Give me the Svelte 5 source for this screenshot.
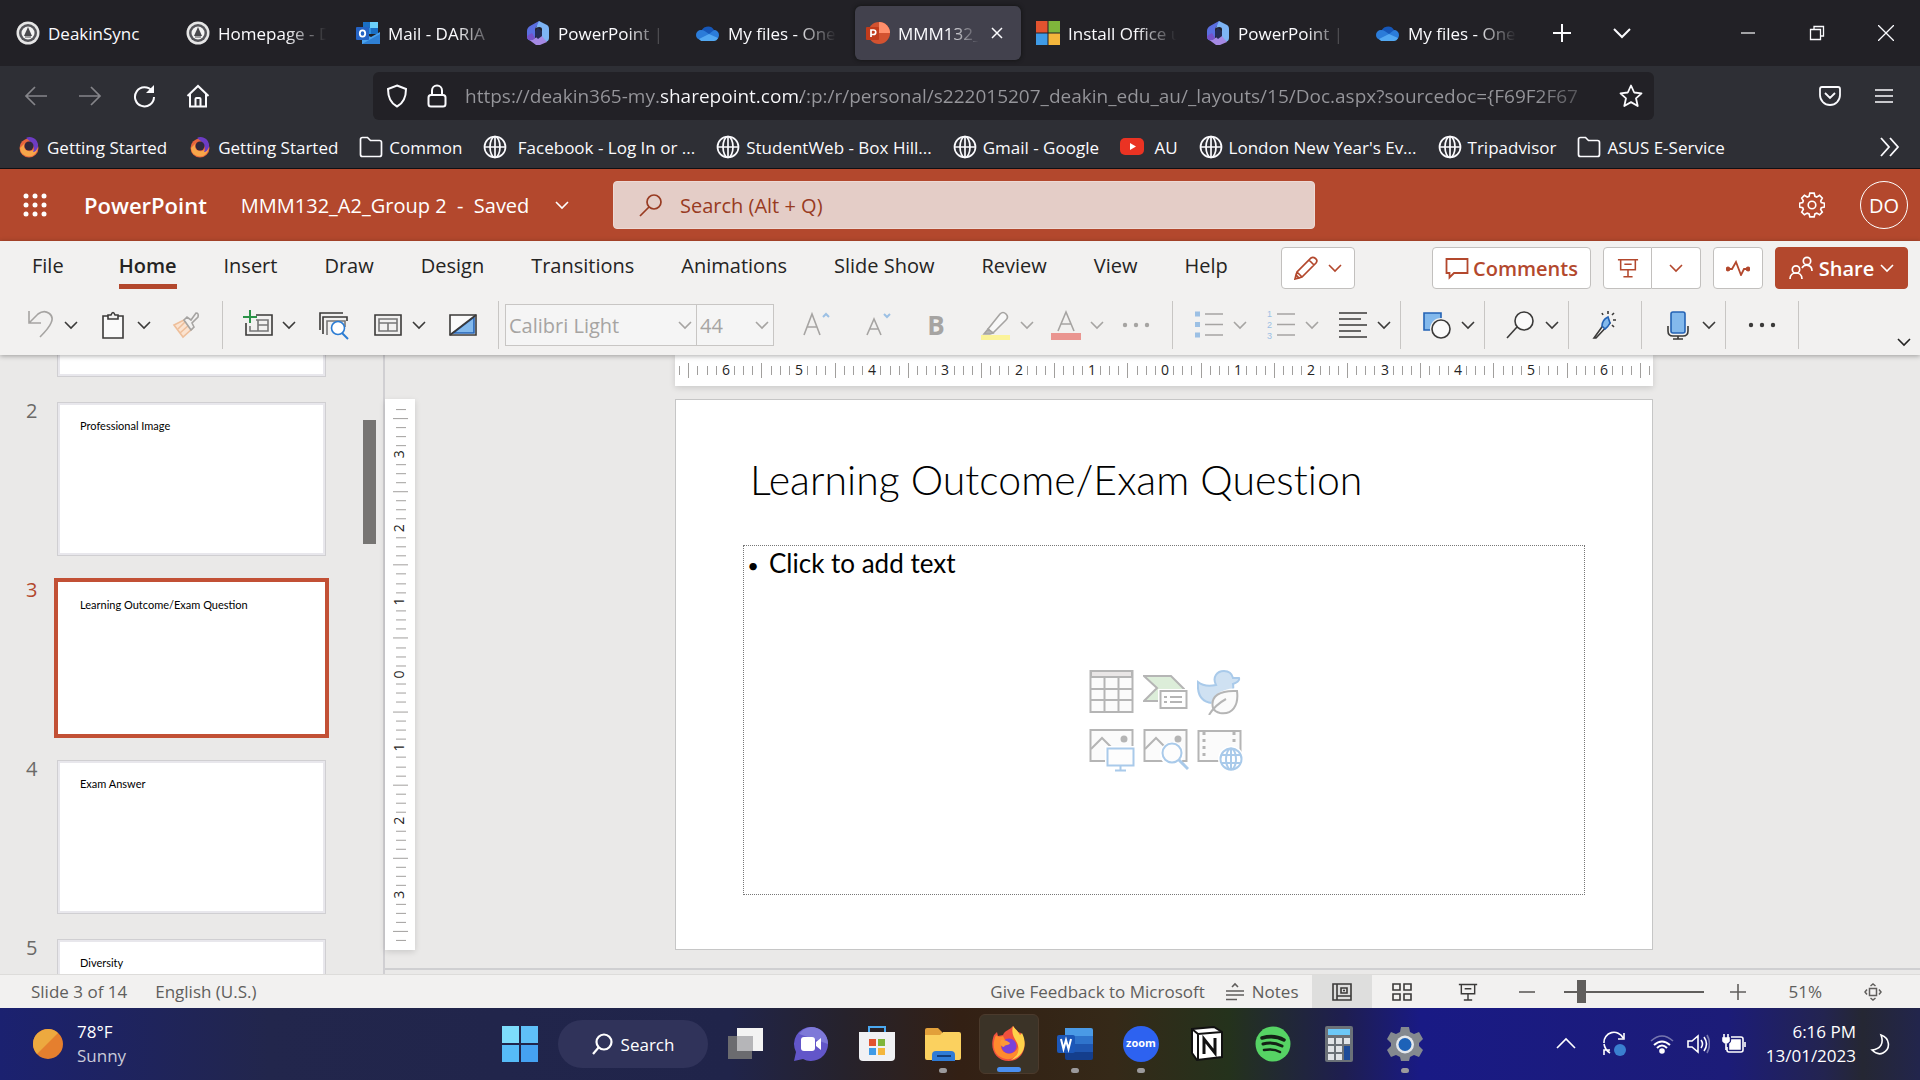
<script lang="ts">
	const browserTabs = [
		{ icon: 'deakin', title: 'DeakinSync' },
		{ icon: 'deakin', title: 'Homepage - D' },
		{ icon: 'outlook', title: 'Mail - DARIA' },
		{ icon: 'office', title: 'PowerPoint | M' },
		{ icon: 'onedrive', title: 'My files - One' },
		{ icon: 'ppt', title: 'MMM132_A', active: true },
		{ icon: 'windows', title: 'Install Office u' },
		{ icon: 'office', title: 'PowerPoint | M' },
		{ icon: 'onedrive', title: 'My files - One' }
	];

	const bookmarks = [
		{ icon: 'firefox', label: 'Getting Started' },
		{ icon: 'firefox', label: 'Getting Started' },
		{ icon: 'folder', label: 'Common' },
		{ icon: 'globe', label: '\u00a0Facebook - Log In or ...' },
		{ icon: 'globe', label: 'StudentWeb - Box Hill...' },
		{ icon: 'globe', label: 'Gmail - Google' },
		{ icon: 'youtube', label: '\u00a0AU' },
		{ icon: 'globe', label: "London New Year's Ev..." },
		{ icon: 'globe', label: 'Tripadvisor' },
		{ icon: 'folder', label: 'ASUS E-Service' }
	];

	const ribbonTabs = ['File', 'Home', 'Insert', 'Draw', 'Design', 'Transitions', 'Animations', 'Slide Show', 'Review', 'View', 'Help'];

	const slides = [
		{ id: 1, title: '' },
		{ id: 2, title: 'Professional Image' },
		{ id: 3, title: 'Learning Outcome/Exam Question' },
		{ id: 4, title: 'Exam Answer' },
		{ id: 5, title: 'Diversity' }
	];

	const taskApps = [
		{ icon: 'taskview', label: 'Task View' },
		{ icon: 'chat', label: 'Chat' },
		{ icon: 'store', label: 'Microsoft Store' },
		{ icon: 'explorer', label: 'File Explorer', open: true },
		{ icon: 'firefox', label: 'Firefox', active: true },
		{ icon: 'word', label: 'Word', open: true },
		{ icon: 'zoom', label: 'Zoom', open: true },
		{ icon: 'notion', label: 'Notion' },
		{ icon: 'spotify', label: 'Spotify' },
		{ icon: 'calculator', label: 'Calculator' },
		{ icon: 'settings', label: 'Settings', open: true }
	];

	let url = $state('https://deakin365-my.sharepoint.com/:p:/r/personal/s222015207_deakin_edu_au/_layouts/15/Doc.aspx?sourcedoc={F69F2F67');
	let ribbon = $state('Home');
	let selected = $state(3);
	let zoom = $state(51);

	// eight ticks to the inch, every fourth one long, whole inches get a number
	const inch = 73.2;
	function ticks(length: number) {
		const mid = length / 2;
		const count = Math.floor((mid - 3) / (inch / 8));
		const list = [];
		for (let i = -count; i <= count; i++) {
			list.push({ pos: Math.round(mid + (i * inch) / 8), long: i % 4 === 0, num: i % 8 === 0 ? Math.abs(i / 8) : null });
		}
		return list;
	}
	const across = ticks(978);
	const down = ticks(550);
</script>

{#snippet chevron()}
	<svg class="chev" viewBox="0 0 14 14" width="14" height="14"><path d="M1 4l6 6 6-6" fill="none" stroke="currentColor" stroke-width="1.6" /></svg>
{/snippet}

{#snippet siteIcon(name: string)}
	<svg class="site" viewBox="0 0 24 24" width="24" height="24">
		{#if name === 'deakin'}
			<circle cx="12" cy="12" r="11.5" fill="#e6e6e6" />
			<circle cx="12" cy="12" r="9" fill="#55555a" />
			<circle cx="12" cy="12" r="6.5" fill="#f2f2f2" />
			<path d="M12 6l4 9H8z" fill="#4a4a4e" />
			<path d="M9 16h6" stroke="#4a4a4e" />
		{:else if name === 'outlook'}
			<path d="M7 1h15v12H7z" fill="#1a6fc4" />
			<path d="M14 1h8v6h-8z" fill="#6bd0fa" />
			<path d="M7 7h8v6H7z" fill="#2a8fe0" />
			<path d="M6 12l9 4 9-5v12H6z" fill="#4aa3ee" />
			<path d="M6 23l18-10v10z" fill="#2f80d4" />
			<rect y="6" width="13" height="13" rx="1" fill="#2563c4" />
			<ellipse cx="6.500" cy="12.500" rx="2.700" ry="3.100" fill="none" stroke="#fff" stroke-width="1.800" />
		{:else if name === 'office'}
			<path d="M13 0L4 5C2 6 1 8 1 10v6c0 3 3 4 5 3l3-2V9c0-2 1-3 2-4l4-2z" fill="#5a6ee0" />
			<path d="M13 0l8 4c2 1 2 3 2 5v8c0 2-1 3-3 4l-4-3V8c0-2-3-3-6-1z" fill="#7db4f4" />
			<path d="M2 18c2 2 5 1 7-1l6-3 6 7-7 3c-1 1-3 1-4 0z" fill="#a58ae4" />
			<path d="M1 15l5-3 3 5c-3 3-6 3-8 0z" fill="#7652c9" />
			<path d="M12 7l4 3v5l-4 3-3-3v-5z" fill="#242b52" />
		{:else if name === 'onedrive'}
			<path d="M5 12a7 7 0 0113-3l-3 9H4z" fill="#1657b8" />
			<path d="M5 19a5 5 0 010-10c3 0 5 2 8 4l5-4a5 5 0 015 5c0 3-2 5-5 5z" fill="#2b7cd9" />
			<path d="M3 18l10-5 9 4c-1 2-2 3-4 3H5z" fill="#52a8f2" />
		{:else if name === 'ppt'}
			<circle cx="13" cy="12" r="11" fill="#d35230" />
			<path d="M13 1a11 11 0 0111 11H13z" fill="#ff8f6b" />
			<rect y="6" width="13" height="13" rx="1" fill="#c13b1b" />
			<path d="M5 16V9h2.500a2 2 0 010 4.500H5" fill="none" stroke="#fff" stroke-width="1.700" />
		{:else if name === 'windows'}
			<path d="M0 0h11.500v11.500H0z" fill="#e2532f" />
			<path d="M12.500 0H24v11.500H12.500z" fill="#7fb63b" />
			<path d="M0 12.500h11.500V24H0z" fill="#3f9be6" />
			<path d="M12.500 12.500H24V24H12.500z" fill="#f4b63c" />
		{:else if name === 'firefox'}
			<circle cx="12" cy="13" r="9.500" fill="#e8643c" />
			<path d="M3 13a9 9 0 0014 7c5-4 4-10 2-13 1 6-3 10-8 9-4-1-5-5-3-8z" fill="#f7a64a" />
			<path d="M9 3c4-3 13 0 12 9-1 3-3 5-5 5 3-6-2-10-7-14z" fill="#6d3cc4" />
			<circle cx="12" cy="11" r="4.500" fill="#30283c" />
		{:else if name === 'folder'}
			<path d="M1.500 4.500q0-2 2-2h5l3 3h9q2 0 2 2v12q0 2-2 2h-17q-2 0-2-2z" fill="none" stroke="#fbfbfe" stroke-width="1.700" />
		{:else if name === 'globe'}
			<g fill="none" stroke="#fbfbfe" stroke-width="1.700">
				<circle cx="12" cy="12" r="10.500" />
				<ellipse cx="12" cy="12" rx="5" ry="10.500" />
				<path d="M12 1.500v21M2 12h20" />
			</g>
		{:else if name === 'youtube'}
			<rect y="3" width="24" height="17" rx="5" fill="#ea3323" />
			<path d="M10 8l6 3.500-6 3.500z" fill="#fff" />
		{/if}
	</svg>
{/snippet}

{#snippet presentIcon(size: number)}
	<svg viewBox="0 0 24 24" width={size} height={size} fill="none" stroke="currentColor" stroke-width="1.700">
		<path d="M1 3h22M4 3v11h16V3M8 8h8M12 14v7M7 21.500h10" />
	</svg>
{/snippet}

{#snippet appIcon(name: string)}
	<svg viewBox="0 0 36 36" width="36" height="36">
		{#if name === 'taskview'}
			<path d="M1 10h24v23H1z" fill="#6b6b6f" />
			<path d="M10 2h26v23H10z" fill="#f3f3f3" />
			<path d="M10 10h16v15H10z" fill="#b5b5b8" />
		{:else if name === 'chat'}
			<path d="M18 1a17 17 0 11-8 32l-9 2 2-9A17 17 0 0118 1z" fill="#6256c9" />
			<path d="M18 1a17 17 0 0117 17L6 8a17 17 0 0112-7z" fill="#7e79d8" />
			<rect x="8" y="11" width="14" height="14" rx="3" fill="#fff" />
			<path d="M23 16l5-4v12l-5-4z" fill="#fff" />
		{:else if name === 'store'}
			<path d="M10 8V1h16v7" fill="none" stroke="#4aa8f0" stroke-width="2" />
			<path d="M0 6h36v25q0 4-4 4H4q-4 0-4-4z" fill="#f0f1f4" />
			<path d="M10 13h7v7h-7z" fill="#e2532f" /><path d="M19 13h7v7h-7z" fill="#7fb63b" />
			<path d="M10 22h7v7h-7z" fill="#3f9be6" /><path d="M19 22h7v7h-7z" fill="#f4b63c" />
		{:else if name === 'explorer'}
			<path d="M0 4q0-2 2-2h11l4 4v8H0z" fill="#e2a03a" />
			<path d="M0 9h15l3-3h16q2 0 2 2v24q0 2-2 2H2q-2 0-2-2z" fill="#fbd15f" />
			<path d="M7 35v-6q0-4 4-4h15q4 0 4 4v6z" fill="#2f7cd6" />
			<path d="M12 30h14" stroke="#123d78" stroke-width="2" />
		{:else if name === 'firefox'}
			<path d="M22 0c2 3 4 4 5 6l3 1c8 12 2 28-12 28S-2 22 3 9l3-3 1 4 5-1c2-5 7-5 10-9z" fill="#f0503f" />
			<path d="M22 0c2 3 5 5 7 9l2-2c7 14-1 25-11 27 8-6 9-13 5-19-2-4-5-7-3-15z" fill="#ffd24a" />
			<path d="M5 9c2 2 4 2 7 1l2 4c-5 3-6 10 1 13 6 2 11-2 12-6 2 8-5 13-12 12C3 31 0 20 5 9z" fill="#ff8a2e" />
			<circle cx="18" cy="20" r="7.500" fill="#7a42d8" />
			<path d="M10 14c4-1 7 2 9 3-1 3-5 1-6 4-3 0-5-4-3-7z" fill="#ff9a36" />
		{:else if name === 'word'}
			<path d="M8 2h26q2 0 2 2v7H8z" fill="#4a9ae6" />
			<path d="M8 10h28v9H8z" fill="#2f74cc" />
			<path d="M8 18h28v8H8z" fill="#1f56b0" />
			<path d="M8 26h28v6q0 2-2 2H10q-2 0-2-2z" fill="#143e8c" />
			<rect y="9" width="18" height="18" rx="2" fill="#1c57b8" />
			<path d="M4 13l2.500 10L9 14l2.500 9L14 13" fill="none" stroke="#fff" stroke-width="2" />
		{:else if name === 'zoom'}
			<circle cx="18" cy="18" r="18" fill="#2d62f0" />
			<text x="18" y="21" text-anchor="middle" fill="#fff" font-size="11" font-weight="700" font-family="Open Sans, sans-serif">zoom</text>
		{:else if name === 'notion'}
			<path d="M3 3l22-2 8 5v25l-25 3-5-7z" fill="#fff" stroke="#111" stroke-width="2" />
			<path d="M3 3l6 5 24-2M9 8v26" fill="none" stroke="#111" stroke-width="2" />
			<path d="M15 28V13l11 14V12" fill="none" stroke="#111" stroke-width="3" />
		{:else if name === 'spotify'}
			<circle cx="18" cy="18" r="17.500" fill="#56d364" />
			<g fill="none" stroke="#142116" stroke-linecap="round">
				<path d="M7 12c7-2 15-2 22 2" stroke-width="3.500" />
				<path d="M8 18c7-2 13-1 19 2" stroke-width="3" />
				<path d="M9 24c6-1 11-1 16 2" stroke-width="2.500" />
			</g>
		{:else if name === 'calculator'}
			<rect x="4" width="28" height="36" rx="2" fill="#6b7178" />
			<path d="M7 3h22v6H7z" fill="#6cc8f8" />
			{#each [0, 1, 2] as row}
				{#each [0, 1, 2] as col}
					{#if !(col === 2 && row > 0)}
						<rect x={7 + col * 8} y={12 + row * 8} width="6" height="6" fill="#e1e4e8" />
					{/if}
				{/each}
			{/each}
			<path d="M23 20h6v14h-6z" fill="#1e4c9a" />
		{:else}
			<path d="M14 1h8l1 5 4 2 5-2 4 7-4 4v3l4 4-4 7-5-2-4 2-1 4h-8l-1-4-4-2-5 2-4-7 4-4v-3L0 13l4-7 5 2 4-2z" fill="#84898f" />
			<circle cx="18" cy="18.500" r="9" fill="#e4e8ec" />
			<circle cx="18" cy="18.500" r="6.500" fill="#1d62b8" />
		{/if}
	</svg>
{/snippet}

<div class="screen">
	<div class="tab-strip">
		{#each browserTabs as tab}
			<div class="tab" class:active={tab.active}>
				{@render siteIcon(tab.icon)}
				<span class="tab-title">{tab.title}</span>
				{#if tab.active}
					<button class="plain" aria-label="Close tab">
						<svg viewBox="0 0 14 14" width="14" height="14" stroke="currentColor" stroke-width="1.500"><path d="M2 2l10 10M12 2L2 12" /></svg>
					</button>
				{/if}
			</div>
		{/each}
		<div class="tab-actions">
			<button class="plain" aria-label="New tab">
				<svg viewBox="0 0 18 18" width="18" height="18" stroke="currentColor" stroke-width="2"><path d="M9 0v18M0 9h18" /></svg>
			</button>
			<button class="plain" aria-label="List all tabs">
				<svg viewBox="0 0 18 18" width="18" height="18" fill="none" stroke="currentColor" stroke-width="2"><path d="M1 5l8 8 8-8" /></svg>
			</button>
		</div>
		<div class="window-buttons">
			<button class="plain" aria-label="Minimise"><svg viewBox="0 0 16 16" width="16" height="16" stroke="currentColor" stroke-width="1.200"><path d="M1 8h14" /></svg></button>
			<button class="plain" aria-label="Restore"><svg viewBox="0 0 16 16" width="16" height="16" fill="none" stroke="currentColor" stroke-width="1.300"><path d="M1.500 4.500h10v10h-10zM5 4V1.500h9.500V11H12" /></svg></button>
			<button class="plain" aria-label="Close"><svg viewBox="0 0 16 16" width="16" height="16" stroke="currentColor" stroke-width="1.300"><path d="M0 0l16 16M16 0L0 16" /></svg></button>
		</div>
	</div>

	<div class="nav-bar">
		<div class="nav-buttons">
			<button class="plain dim" aria-label="Back"><svg viewBox="0 0 24 24" width="24" height="24" fill="none" stroke="currentColor" stroke-width="1.700"><path d="M23 12H2M11 3l-9 9 9 9" /></svg></button>
			<button class="plain dim" aria-label="Forward"><svg viewBox="0 0 24 24" width="24" height="24" fill="none" stroke="currentColor" stroke-width="1.700"><path d="M1 12h21M13 3l9 9-9 9" /></svg></button>
			<button class="plain" aria-label="Reload"><svg viewBox="0 0 24 24" width="24" height="24" fill="none" stroke="currentColor" stroke-width="2"><path d="M20 7a9.500 9.500 0 102 6" /><path d="M22 1v8h-8z" fill="currentColor" stroke="none" /></svg></button>
			<button class="plain" aria-label="Home"><svg viewBox="0 0 24 24" width="24" height="24" fill="none" stroke="currentColor" stroke-width="2"><path d="M1.500 12L12 2l10.500 10M4 10v12.500h16V10M9.500 22v-7q0-1 1-1h3q1 0 1 1v7" /></svg></button>
		</div>
		<div class="url-box">
			<svg viewBox="0 0 24 24" width="24" height="24" fill="none" stroke="currentColor" stroke-width="2"><path d="M12 1.500l9 3.500c0 8-2 14-9 17.500C5 19 3 13 3 5z" /></svg>
			<svg viewBox="0 0 24 24" width="24" height="24" fill="none" stroke="currentColor" stroke-width="2"><rect x="3.500" y="11" width="17" height="11.500" rx="2.500" /><path d="M7 11V6.500a5 5 0 0110 0V11" /></svg>
			<input class="url" aria-label="Address" bind:value={url} />
			<button class="plain" aria-label="Bookmark this page"><svg viewBox="0 0 24 24" width="24" height="24" fill="none" stroke="currentColor" stroke-width="1.800" stroke-linejoin="round"><path d="M12 1.500l3.200 7 7.300.8-5.500 5 1.700 7.700-6.700-3.900L5.300 22 7 14.300l-5.500-5 7.300-.8z" /></svg></button>
		</div>
		<div class="nav-right">
			<button class="plain" aria-label="Save to Pocket"><svg viewBox="0 0 22 20" width="22" height="20" fill="none" stroke="currentColor" stroke-width="1.800"><path d="M3 1h16q2 0 2 2v6a10 10 0 01-20 0V3q0-2 2-2zM6 7l5 5 5-5" /></svg></button>
			<button class="plain" aria-label="Menu"><svg viewBox="0 0 18 16" width="18" height="16" stroke="currentColor" stroke-width="1.700"><path d="M0 2h18M0 8h18M0 14h18" /></svg></button>
		</div>
	</div>

	<div class="bookmarks">
		{#each bookmarks as mark}
			<a href="#{mark.icon}">{@render siteIcon(mark.icon)}<span>{mark.label}</span></a>
		{/each}
		<button class="plain more" aria-label="More bookmarks"><svg viewBox="0 0 20 20" width="20" height="20" fill="none" stroke="currentColor" stroke-width="1.800"><path d="M1 1l8 9-8 9M10 1l8 9-8 9" /></svg></button>
	</div>

	<header>
		<div class="brand">
			<button class="plain" aria-label="App launcher">
				<svg viewBox="0 0 24 24" width="24" height="24" fill="currentColor">
					{#each [3, 12, 21] as y}
						{#each [3, 12, 21] as x}
							<circle cx={x} cy={y} r="2.500" />
						{/each}
					{/each}
				</svg>
			</button>
			<strong>PowerPoint</strong>
			<button class="plain doc-name">MMM132_A2_Group 2&nbsp; -&nbsp; Saved {@render chevron()}</button>
		</div>
		<label class="search">
			<svg viewBox="0 0 24 24" width="24" height="24" fill="none" stroke="currentColor" stroke-width="1.700"><circle cx="15" cy="9" r="7" /><path d="M10 14l-9 9" /></svg>
			<input type="search" placeholder="Search (Alt + Q)" aria-label="Search" />
		</label>
		<div class="account">
			<button class="plain" aria-label="Settings">
				<svg viewBox="0 0 24 24" width="26" height="26" fill="none" stroke="currentColor" stroke-width="1.500">
					<circle cx="12" cy="12" r="3.500" />
					<path d="M10 1h4l.7 3 1.600.7L19 3l2.500 2.700L20 8.300l.6 1.500 2.900.6v3.400l-2.900.7-.6 1.500 1.500 2.600L19 21l-2.600-1.500-1.700.7L14 23h-4l-.7-2.800-1.700-.7L5 21l-2.500-2.500L4 16l-.6-1.500-2.900-.7v-3.400l2.900-.7L4 8.200 2.500 5.700 5 3l2.600 1.600L9.300 4z" />
				</svg>
			</button>
			<button class="avatar">DO</button>
		</div>
	</header>

	<div class="ribbon">
		<div class="ribbon-top">
			<nav>
				{#each ribbonTabs as name}
					<button class:current={ribbon === name} onclick={() => (ribbon = name)}>{name}</button>
				{/each}
			</nav>
			<button class="box pen" aria-label="Editing mode">
				<svg viewBox="0 0 24 24" width="24" height="24" fill="none" stroke="currentColor" stroke-width="1.700"><path d="M1 23l2-7L17 2q2-1.500 4.500.5t.5 4.500L8 21zM3 16l5 5M15 4l5 5M1 23l4-1-3-3z" /></svg>
				{@render chevron()}
			</button>
			<div class="ribbon-actions">
				<button class="box comments">
					<svg viewBox="0 0 24 24" width="24" height="24" fill="none" stroke="currentColor" stroke-width="1.800"><path d="M1.500 3h21v14H9l-4.500 4.500V17h-3z" /></svg>
					Comments
				</button>
				<div class="split">
					<button class="box" aria-label="Present">{@render presentIcon(22)}</button>
					<button class="box" aria-label="Present options">{@render chevron()}</button>
				</div>
				<button class="box catch-up" aria-label="Catch up">
					<svg viewBox="0 0 24 16" width="24" height="16" fill="none" stroke="currentColor" stroke-width="1.800"><path d="M2 9h4l4-7 5 13 3-6h4" /><circle cx="2" cy="9" r="1.500" fill="currentColor" /><circle cx="22" cy="9" r="1.500" fill="currentColor" /></svg>
				</button>
				<button class="box share">
					<svg viewBox="0 0 24 24" width="24" height="24" fill="none" stroke="currentColor" stroke-width="1.700"><circle cx="7" cy="13.500" r="3.700" /><path d="M1 23c0-8 12-8 12 0" /><circle cx="18" cy="5" r="3.700" /><path d="M13 12c2-4 10-4 10 3" /></svg>
					Share
					{@render chevron()}
				</button>
			</div>
		</div>

		<div class="toolbar">
			<div class="group first">
				<button class="tool off" aria-label="Undo"><svg viewBox="0 0 32 32" width="32" height="32"><path d="M5 2v12h12M5 14L14 5c8-6 17 1 13 9-2 5-6 9-11 14" /></svg><span class="dark">{@render chevron()}</span></button>
				<button class="tool" aria-label="Paste"><svg viewBox="0 0 32 32" width="32" height="32"><path d="M6 7h20v22H6z" fill="#fafafa" /><path d="M11 10V6h3q2-5 4 0h3v4z" fill="#f2f1f0" /></svg>{@render chevron()}</button>
				<button class="tool off" aria-label="Format Painter"><svg viewBox="0 0 32 32" width="32" height="32"><path d="M4 16l10-5 8 9-9 8z" fill="#fbe3d0" stroke="#eebf9b" /><path d="M8 20l8-8M10 24l9-8" stroke="#eebf9b" /><path d="M14 11l3-3 4 3 5-7q3 0 2 4l-6 6 2 4-3 3z" fill="#f2f1f0" /></svg></button>
			</div>
			<div class="group slides-group">
				<button class="tool" aria-label="New Slide"><svg viewBox="0 0 32 32" width="32" height="32"><path d="M14 6h16v20H4V14" /><path d="M14 11h12v11H8v-5M16 11v11M16 16h10" stroke="#777" /><path d="M8 1v13M1 8h14" stroke="#2b9348" stroke-width="2" /></svg>{@render chevron()}</button>
				<button class="tool" aria-label="Reuse Slides"><svg viewBox="0 0 32 32" width="32" height="32"><path d="M3 21V4h23M6 25V8h24v4" /><path d="M10 26V12h18v6" stroke="#777" /><circle cx="21" cy="19" r="6.500" fill="#fff" stroke="#2b7cd3" /><path d="M25 24l6 6" stroke="#2b7cd3" stroke-width="2" /></svg></button>
				<button class="tool" aria-label="Layout"><svg viewBox="0 0 32 32" width="32" height="32"><path d="M3 6h26v20H3z" /><path d="M7 10h18v12H7zM7 14h18M16 14v8" stroke="#777" /></svg>{@render chevron()}</button>
				<button class="tool" aria-label="Design Ideas"><svg viewBox="0 0 32 32" width="32" height="32"><path d="M3 6h26v20H3z" fill="#fafafa" /><path d="M27 8v16H6z" fill="#83b9ec" stroke="#2463b5" /><path d="M3 26L29 6" /></svg></button>
			</div>
			<div class="group font-group">
				<div class="font-boxes">
					<span class="select family"><select aria-label="Font"><option>Calibri Light</option></select>{@render chevron()}</span>
					<span class="select size"><select aria-label="Font size"><option>44</option></select>{@render chevron()}</span>
				</div>
				<div class="run wide off">
					<button class="tool" aria-label="Grow font"><svg viewBox="0 0 32 32" width="32" height="32"><path d="M4 26L12 5l8 21M7 18h10" /><path d="M23 8l3-3 3 3" stroke="#9cc0e4" stroke-width="2" /></svg></button>
					<button class="tool" aria-label="Shrink font"><svg viewBox="0 0 32 32" width="32" height="32"><path d="M7 26l7-16 7 16M9 20h10" /><path d="M24 5l3 3 3-3" stroke="#9cc0e4" stroke-width="2" /></svg></button>
					<button class="tool bold" aria-label="Bold">B</button>
					<button class="tool" aria-label="Highlight"><svg viewBox="0 0 32 32" width="32" height="32"><path d="M8 20L20 5q3-3 6 0t0 6L13 24z" fill="#f8f8f8" /><path d="M8 20l5 4-3 1H4z" fill="#b5b5b5" /><path d="M1 28.500h29" stroke="#fbf39a" stroke-width="5" /></svg>{@render chevron()}</button>
				</div>
				<div class="run off">
					<button class="tool" aria-label="Font color"><svg viewBox="0 0 32 32" width="32" height="32"><path d="M8 22l8-19 8 19M11 15h10" /><path d="M1 27.500h30" stroke="#ea9590" stroke-width="7" /></svg>{@render chevron()}</button>
					<button class="tool" aria-label="More font options"><svg viewBox="0 0 32 32" width="32" height="32"><g fill="currentColor" stroke="none"><circle cx="5" cy="16" r="2.200" /><circle cx="16" cy="16" r="2.200" /><circle cx="27" cy="16" r="2.200" /></g></svg></button>
				</div>
			</div>
			<div class="group menu-end">
				<button class="tool off" aria-label="Bullets"><svg viewBox="0 0 32 32" width="32" height="32"><path d="M12 5h18M12 15.500h18M12 26h18" /><path d="M2 5h5M2 15.500h5M2 26h5" stroke="#9cc0e4" stroke-width="5" /></svg>{@render chevron()}</button>
				<button class="tool off" aria-label="Numbering"><svg viewBox="0 0 32 32" width="32" height="32"><path d="M12 5h18M12 15.500h18M12 26h18" /><g class="digits"><text x="2" y="8">1</text><text x="2" y="19">2</text><text x="2" y="30">3</text></g></svg>{@render chevron()}</button>
				<button class="tool" aria-label="Align"><svg viewBox="0 0 32 32" width="32" height="32"><path d="M2 4h28M2 10h22M2 16h28M2 22h22M2 28h28" /></svg>{@render chevron()}</button>
			</div>
			<div class="group menu-end">
				<button class="tool" aria-label="Shapes"><svg viewBox="0 0 32 32" width="32" height="32"><path d="M3 4h17v17H3z" fill="#83b9ec" stroke="#2463b5" /><circle cx="20" cy="20" r="11" fill="#f2f1f0" stroke="none" /><circle cx="20" cy="20" r="9" fill="#fafafa" /></svg>{@render chevron()}</button>
			</div>
			<div class="group menu-end">
				<button class="tool" aria-label="Find"><svg viewBox="0 0 32 32" width="32" height="32"><circle cx="19" cy="12" r="9" fill="#fafafa" /><path d="M12 18L2 29" /></svg>{@render chevron()}</button>
			</div>
			<div class="group">
				<button class="tool" aria-label="Designer"><svg viewBox="0 0 32 32" width="32" height="32"><path d="M5 29L18 11l3 3L7 29z" fill="#fafafa" /><path d="M13 17q0-6 6-9l2 6q-2 4-5 6z" fill="#83b9ec" stroke="#2463b5" /><path d="M13 4l1 2M19 2v3M25 4l-2 2M24 11h3M23 16l2 2" /></svg></button>
			</div>
			<div class="group menu-end">
				<button class="tool" aria-label="Dictate"><svg viewBox="0 0 32 32" width="32" height="32"><rect x="9" y="3" width="14" height="21" rx="2" fill="#83b9ec" stroke="#2463b5" /><path d="M6 17v5q0 5 5 5h10q5 0 5-5v-5M16 27v3M11 30h10" /></svg>{@render chevron()}</button>
			</div>
			<div class="group">
				<button class="tool" aria-label="More options"><svg viewBox="0 0 32 32" width="32" height="32"><g fill="currentColor" stroke="none"><circle cx="5" cy="16" r="2.200" /><circle cx="16" cy="16" r="2.200" /><circle cx="27" cy="16" r="2.200" /></g></svg></button>
			</div>
			<button class="plain collapse" aria-label="Ribbon display options">{@render chevron()}</button>
		</div>
	</div>

	<div class="workspace">
		<aside>
			<ol>
				{#each slides as slide}
					<li class:selected={slide.id === selected}>
						<span class="number">{slide.id}</span>
						<button class="thumb" aria-label="Slide {slide.id}" onclick={() => (selected = slide.id)}><span>{slide.title}</span></button>
					</li>
				{/each}
			</ol>
			<div class="scroll-thumb"></div>
		</aside>

		<main>
			<svg class="ruler across" viewBox="0 0 978 31">
				{#each across as t}
					{#if t.num !== null}
						<text x={t.pos + 1} y="20">{t.num}</text>
					{:else if t.long}
						<path d="M{t.pos + 0.5} 8v15" />
					{:else}
						<path d="M{t.pos + 0.5} 11v9" />
					{/if}
				{/each}
			</svg>
			<svg class="ruler down" viewBox="0 0 30 550">
				{#each down as t}
					{#if t.num !== null}
						<text transform="translate(19 {t.pos}) rotate(-90)">{t.num}</text>
					{:else if t.long}
						<path d="M8 {t.pos + 0.5}h15" />
					{:else}
						<path d="M11 {t.pos + 0.5}h10" />
					{/if}
				{/each}
			</svg>
			<article class="slide">
				<h1>Learning Outcome/Exam Question</h1>
				<div class="placeholder">
					<ul><li>Click to add text</li></ul>
					<div class="inserts">
						<button class="plain" aria-label="Insert table"><svg viewBox="0 0 46 46" width="46" height="46"><path d="M1.500 2h42v41h-42z" fill="#fbfbfb" /><path d="M2 2h41v6H2z" fill="#e9e6e6" /><path d="M1.500 8h42M1.500 20h42M1.500 31h42M15.500 8v35M29.500 8v35" /></svg></button>
						<button class="plain" aria-label="Insert SmartArt"><svg viewBox="0 0 46 46" width="46" height="46"><path d="M1 7h27l13 13v12H1l13-13z" fill="#dcedd9" /><path d="M15 20h31v22H15z" fill="#fff" stroke="none" /><path d="M17.500 22h26v17h-26z" fill="#fff" /><path d="M21 28h3M27 28h12M21 33h3M27 33h12" /></svg></button>
						<button class="plain" aria-label="Insert icon"><svg viewBox="0 0 46 46" width="46" height="46"><path d="M1 13c6 5 13 4 18 3-4-8 1-14 8-14 5 0 8 3 9 7h6c1 3-3 5-6 6 2 12-8 20-21 19C5 33 0 26 1 13z" fill="#cfe1f2" stroke="#a9caea" /><path d="M14 45c-2-18 8-26 30-26 1 14-4 27-20 27z" fill="#fff" stroke="none" /><path d="M16 39c-3-12 7-18 24-17 2 15-5 24-17 22q-5-1-7-5zM12 46q6-10 17-16" fill="#fbfbfb" /></svg></button>
						<button class="plain" aria-label="Insert stock image"><svg viewBox="0 0 46 46" width="46" height="46"><path d="M1.500 3h42v31h-42z" fill="#fbfbfb" /><path d="M2 22l11-11 9 9" /><circle cx="35" cy="12" r="2.500" fill="#b5b5b5" /><path d="M16 19h30v25H16z" fill="#fff" stroke="none" /><path d="M18.500 21.500h26v17h-26zM31.500 39v4M26 43.500h11" stroke="#a9caea" fill="#fdfdfd" /></svg></button>
						<button class="plain" aria-label="Insert picture"><svg viewBox="0 0 46 46" width="46" height="46"><path d="M1.500 3h42v31h-42z" fill="#fbfbfb" /><path d="M2 22l11-11 9 9" /><circle cx="35" cy="12" r="2.500" fill="#b5b5b5" /><circle cx="29" cy="27" r="12" fill="#fff" stroke="none" /><circle cx="29" cy="26" r="9.500" fill="#fdfdfd" stroke="#a9caea" /><path d="M36 33l9 9" stroke="#a9caea" stroke-width="3" /></svg></button>
						<button class="plain" aria-label="Insert video"><svg viewBox="0 0 46 46" width="46" height="46"><path d="M1.500 4h42v30h-42z" fill="#fbfbfb" /><path d="M7 5v28M37 5v14" stroke-width="3" stroke-dasharray="3 4" /><circle cx="34" cy="32" r="13" fill="#fff" stroke="none" /><g stroke="#a9caea" fill="none"><circle cx="34" cy="32" r="10.500" /><ellipse cx="34" cy="32" rx="5" ry="10.500" /><path d="M34 21v22M25 28h18M25 36h18" /></g></svg></button>
					</div>
				</div>
			</article>
		</main>
	</div>

	<div class="status">
		<span>Slide 3 of 14</span>
		<button class="plain language">English (U.S.)</button>
		<button class="plain feedback">Give Feedback to Microsoft</button>
		<button class="plain notes"><svg viewBox="0 0 20 20" width="20" height="20" fill="none" stroke="currentColor" stroke-width="1.600"><path d="M7 5l3-3 3 3M1 9h18M1 13h18M1 17.500h11" /></svg>Notes</button>
		<button class="plain view on" aria-label="Normal view"><svg viewBox="0 0 20 18" width="20" height="18" fill="none" stroke="currentColor" stroke-width="1.600"><path d="M1 1h18v16H1zM5 1v16M5 13h14M9 5h6v5H9zM11 7.500h2" /></svg></button>
		<button class="plain view" aria-label="Slide sorter"><svg viewBox="0 0 20 18" width="20" height="18" fill="none" stroke="currentColor" stroke-width="1.600"><path d="M1 1h7v6H1zM12 1h7v6h-7zM1 11h7v6H1zM12 11h7v6h-7z" /></svg></button>
		<button class="plain view show" aria-label="Slide show">{@render presentIcon(20)}</button>
		<button class="plain step" aria-label="Zoom out"><svg viewBox="0 0 18 18" width="18" height="18" stroke="currentColor" stroke-width="1.600"><path d="M1 9h16" /></svg></button>
		<input type="range" min="10" max="400" aria-label="Zoom" bind:value={zoom} />
		<button class="plain step" aria-label="Zoom in"><svg viewBox="0 0 18 18" width="18" height="18" stroke="currentColor" stroke-width="1.600"><path d="M1 9h16M9 1v16" /></svg></button>
		<span class="percent">{zoom}%</span>
		<button class="plain" aria-label="Fit to window"><svg viewBox="0 0 18 18" width="18" height="18" fill="none" stroke="currentColor" stroke-width="1.500"><path d="M5.500 5.500h7v7h-7zM6.500 3L9 1l2.500 2M6.500 15L9 17l2.500-2M3 6.500L1 9l2 2.500M15 6.500L17 9l-2 2.500" /></svg></button>
	</div>

	<footer>
		<button class="plain weather">
			<svg viewBox="0 0 32 32" width="32" height="32"><circle cx="16" cy="16" r="15" fill="#e57f2e" /><path d="M1 16A15 15 0 0126 5L5 26q-4-5-4-10z" fill="#eda93f" /></svg>
			<span>78°F<small>Sunny</small></span>
		</button>
		<div class="apps">
			<button class="plain app" aria-label="Start">
				<svg viewBox="0 0 36 36" width="36" height="36"><path d="M0 0h17v17H0z" fill="#7ddcfb" /><path d="M19 0h17v17H19z" fill="#5fc0f8" /><path d="M0 19h17v17H0z" fill="#56bbf7" /><path d="M19 19h17v17H19z" fill="#45a2f2" /></svg>
			</button>
			<button class="plain task-search"><svg viewBox="0 0 22 22" width="22" height="22" fill="none" stroke="currentColor" stroke-width="2.200"><circle cx="13" cy="9" r="7.500" /><path d="M8 14l-6 7" /></svg>Search</button>
			{#each taskApps as app}
				<button class="plain app" class:open={app.open} class:active={app.active} aria-label={app.label}>{@render appIcon(app.icon)}</button>
			{/each}
		</div>
		<div class="tray">
			<svg viewBox="0 0 20 20" width="20" height="20"><path d="M1 14l9-9 9 9" /></svg>
			<svg class="sync" viewBox="0 0 26 26" width="26" height="26"><path d="M2 12A10 10 0 0121 7M22 2v6h-6M8 22q-5-3-6-9M2 24v-5h6" /><circle cx="18" cy="19" r="6" fill="#3a7fd0" stroke="none" /></svg>
			<div class="indicators">
				<svg viewBox="0 0 24 22" width="24" height="22"><path d="M1 8q11-10 22 0" opacity=".4" /><path d="M4 12q8-7 16 0M7 15q5-5 10 0" stroke-width="2" /><circle cx="12" cy="18" r="2" fill="#fff" /></svg>
				<svg viewBox="0 0 24 22" width="24" height="22"><path d="M2 8h4l6-5v16l-6-5H2zM15 7q3 4 0 8M18 4q5 7 0 14" /><path d="M21 2q5 9 0 18" opacity=".4" /></svg>
				<svg viewBox="0 0 24 22" width="24" height="22"><path d="M9 4h10q2 0 2 2v11q0 2-2 2H7q-2 0-2-2v-3M23 9v5" /><path d="M10 7h8v9H8v-5q2-1 2-4z" fill="#fff" /><path d="M2 1v4M6 1v4M1 5h6v3q-3 4-6 0zM4 10v7" fill="#fff" /></svg>
			</div>
			<div class="clock"><span>6:16 PM</span><span>13/01/2023</span></div>
			<svg viewBox="0 0 22 22" width="22" height="22"><path d="M12 2c9 3 10 14 2 18-4 2-8 0-11-3 9-1 12-7 9-15z" /></svg>
		</div>
	</footer>
</div>

<style>
	:global(body) {
		margin: 0;
		overflow: hidden;
	}
	.screen {
		display: flex;
		flex-direction: column;
		height: 100vh;
		font-family: 'Open Sans', 'Noto Sans', sans-serif;
		font-size: 17px;
		color: #252423;
		background: #eae9e8;
	}
	button,
	input,
	select {
		font: inherit;
		color: inherit;
	}
	button {
		display: flex;
		align-items: center;
		white-space: nowrap;
		cursor: pointer;
	}
	svg {
		flex: none;
		display: block;
	}
	.plain {
		padding: 0;
		border: 0;
		background: none;
	}

	/* browser chrome */
	.tab-strip {
		display: flex;
		align-items: center;
		height: 66px;
		padding-left: 3px;
		background: #222126;
		color: #fbfbfe;
	}
	.tab {
		display: flex;
		align-items: center;
		gap: 8px;
		box-sizing: border-box;
		width: 166px;
		height: 54px;
		margin: 0 2px;
		padding: 0 10px 0 11px;
		border-radius: 6px;
	}
	.tab.active {
		padding-right: 17px;
		background: #42414d;
		box-shadow: 0 0 4px #111;
	}
	.tab-title {
		flex: 1;
		overflow: hidden;
		white-space: nowrap;
		mask-image: linear-gradient(to right, #000 60%, transparent 96%);
	}
	.tab:first-child .tab-title {
		mask-image: none;
	}
	.tab-actions {
		display: flex;
		gap: 42px;
		margin-left: 20px;
	}
	.window-buttons {
		display: flex;
		gap: 53px;
		margin-left: auto;
		padding-right: 26px;
	}
	.nav-bar {
		display: flex;
		align-items: center;
		height: 60px;
		background: #2e2f35;
		color: #fbfbfe;
	}
	.nav-buttons {
		display: flex;
		gap: 30px;
		width: 349px;
		padding-left: 24px;
	}
	.dim {
		color: #85858a;
	}
	.url-box {
		display: flex;
		flex: 1;
		align-items: center;
		gap: 16px;
		height: 48px;
		padding: 0 11px 0 12px;
		border-radius: 6px;
		background: #222126;
	}
	.url {
		flex: 1;
		min-width: 0;
		padding: 0;
		border: 0;
		outline: 0;
		font-size: 19px;
		line-height: 30px;
		color: transparent;
		/* only the host is bright, the end fades out */
		background-image: linear-gradient(to right, #96969b 195px, #fbfbfe 195px, #fbfbfe 336px, #96969b 336px, #96969b 1070px, #222126 1145px);
		background-clip: text;
	}
	.nav-right {
		display: flex;
		align-items: center;
		gap: 34px;
		margin-left: 165px;
		padding-right: 27px;
	}
	.bookmarks {
		display: flex;
		align-items: center;
		gap: 21px;
		height: 42px;
		padding-left: 17px;
		border-bottom: 1px solid #101014;
		background: #2e2f35;
		color: #fbfbfe;
	}
	.bookmarks a {
		display: flex;
		align-items: center;
		gap: 6px;
		color: inherit;
		text-decoration: none;
		white-space: nowrap;
	}
	.more {
		margin-left: auto;
		padding-right: 20px;
	}

	/* app header */
	header {
		display: grid;
		grid-template-columns: 613fr 702fr 605fr;
		align-items: center;
		height: 72px;
		background: #b3482d;
		color: #fff;
		font-size: 20px;
	}
	.brand {
		display: flex;
		align-items: center;
		padding-left: 23px;
	}
	.brand strong {
		margin: 0 34px 0 37px;
		font-size: 22px;
		font-weight: 600;
	}
	.doc-name .chev {
		margin-left: 26px;
	}
	.search {
		display: flex;
		align-items: center;
		gap: 17px;
		box-sizing: border-box;
		height: 48px;
		padding: 0 25px;
		border: 1px solid #edd9d4;
		border-radius: 4px;
		background: #e4cdc7;
		color: #983b22;
	}
	.search input {
		flex: 1;
		padding: 0;
		border: 0;
		outline: 0;
		background: none;
	}
	.search input::placeholder {
		color: #983b22;
		opacity: 1;
	}
	.account {
		display: flex;
		align-items: center;
		justify-content: flex-end;
		gap: 35px;
		padding-right: 12px;
	}
	.avatar {
		justify-content: center;
		width: 48px;
		height: 48px;
		padding: 0;
		border: 1px solid #fff;
		border-radius: 50%;
		background: none;
	}

	/* ribbon */
	.ribbon {
		position: relative;
		z-index: 1;
		background: #f2f1f0;
		box-shadow: 0 1px 5px #0005;
	}
	.ribbon-top {
		display: flex;
		align-items: center;
		height: 54px;
		padding: 0 12px 0 32px;
	}
	nav {
		display: flex;
		gap: 47px;
	}
	nav button {
		height: 42px;
		padding: 0;
		border: 0;
		border-bottom: 5px solid transparent;
		background: none;
		font-size: 20px;
	}
	nav button:first-child {
		margin-right: 8px;
	}
	nav .current {
		border-color: #b3482d;
		font-weight: 600;
	}
	.box {
		justify-content: center;
		box-sizing: border-box;
		height: 42px;
		padding: 0 12px;
		border: 1px solid #c2c0be;
		border-radius: 4px;
		background: #fff;
		color: #b3482d;
		font-size: 20px;
		font-weight: 600;
	}
	.pen {
		gap: 10px;
		width: 74px;
		margin-left: 53px;
	}
	.ribbon-actions {
		display: flex;
		gap: 12px;
		margin-left: auto;
	}
	.comments {
		gap: 4px;
		width: 159px;
	}
	.split {
		display: flex;
	}
	.split .box {
		width: 49px;
		border-radius: 4px 0 0 4px;
	}
	.split .box + .box {
		border-left: 0;
		border-radius: 0 4px 4px 0;
	}
	.catch-up {
		width: 50px;
	}
	.share {
		gap: 6px;
		width: 133px;
		border-color: #b3482d;
		background: #b3482d;
		color: #fff;
	}
	.toolbar {
		display: flex;
		align-items: center;
		height: 60px;
	}
	.group {
		display: flex;
		align-items: center;
		gap: 20px;
		box-sizing: border-box;
		height: 48px;
		padding: 0 20px;
		border-right: 1px solid #c8c6c4;
	}
	.group.first {
		gap: 21px;
		padding-left: 24px;
	}
	.slides-group {
		gap: 23px;
		padding: 0 19px;
	}
	.menu-end {
		padding-right: 11px;
	}
	.font-group {
		gap: 18px;
		padding-left: 6px;
	}
	.tool {
		gap: 8px;
		padding: 0;
		border: 0;
		background: none;
		color: #3b3a39;
	}
	.tool svg {
		fill: none;
		stroke: currentColor;
		stroke-width: 1.6;
	}
	.tool .chev {
		margin-right: -2px;
	}
	.off,
	.off .tool {
		color: #a6a4a2;
	}
	.tool .dark {
		color: #3b3a39;
	}
	.bold {
		justify-content: center;
		width: 32px;
		font-size: 26px;
		font-weight: 700;
	}
	.digits {
		fill: #9cc0e4;
		stroke: none;
		font-family: 'Liberation Sans', sans-serif;
		font-size: 9px;
	}
	.run {
		display: flex;
		align-items: center;
		gap: 18px;
	}
	.run.wide {
		gap: 28px;
	}
	.font-boxes {
		display: flex;
		margin-right: 8px;
		color: #a6a4a2;
	}
	.select {
		display: grid;
		align-items: center;
		box-sizing: border-box;
		height: 42px;
		border: 1px solid #c8c6c4;
		background: #f5f5f5;
	}
	.select select,
	.select .chev {
		grid-area: 1 / 1;
	}
	.select select {
		appearance: none;
		height: 40px;
		padding: 0 3px;
		border: 0;
		outline: 0;
		background: none;
		font-size: 20px;
	}
	.select .chev {
		justify-self: end;
		margin-right: 4px;
		pointer-events: none;
	}
	.family {
		width: 192px;
	}
	.size {
		width: 77px;
		border-left: 0;
	}
	.collapse {
		align-self: flex-end;
		margin-left: auto;
		padding: 0 9px 6px 0;
	}

	/* slide list and canvas */
	.workspace {
		display: flex;
		flex: 1;
		min-height: 0;
	}
	aside {
		display: flex;
		justify-content: space-between;
		box-sizing: border-box;
		width: 385px;
		padding-right: 7px;
		border-right: 2px solid #d0cfd2;
		overflow: hidden;
	}
	ol {
		display: flex;
		flex-direction: column;
		gap: 25px;
		/* list is scrolled most of the way past the first slide */
		margin: -132px 0 0;
		padding: 0;
		list-style: none;
	}
	ol li {
		display: flex;
	}
	.number {
		width: 31px;
		padding-left: 26px;
		font-size: 20px;
		line-height: 18px;
		color: #6b6967;
	}
	.thumb {
		align-items: flex-start;
		box-sizing: border-box;
		width: 269px;
		height: 154px;
		padding: 16px 22px;
		border: 1px solid #d0cfd2;
		outline: 2px solid #e8e7ec;
		outline-offset: -3px;
		background: #fff;
		font-family: Lato, sans-serif;
		font-size: 11px;
		color: #000;
	}
	.selected .thumb {
		border-color: #fff;
		outline: 4px solid #c25035;
		outline-offset: -1px;
	}
	.selected .number {
		color: #b3482d;
	}
	.scroll-thumb {
		width: 13px;
		height: 124px;
		margin-top: 65px;
		background: #777573;
	}
	main {
		display: grid;
		flex: 1;
		grid-template-columns: 30px 260fr 978fr 267fr;
		grid-template-rows: auto auto;
		align-content: start;
		row-gap: 13px;
		margin-bottom: 4px;
		border-bottom: 2px solid #cfcfd1;
	}
	.ruler {
		background: #fff;
		box-shadow: 0 2px 6px #0002;
	}
	.ruler path {
		stroke: #a19f9d;
	}
	.ruler text {
		text-anchor: middle;
		font-size: 14px;
		fill: #252423;
	}
	.across {
		grid-column: 3;
		width: 100%;
	}
	.down {
		grid-column: 1;
		height: 100%;
	}
	.slide {
		display: flex;
		flex-direction: column;
		grid-column: 3;
		box-sizing: border-box;
		aspect-ratio: 978 / 551;
		padding: 51px 67px 54px;
		border: 1px solid #c6c6c6;
		background: #fff;
		font-family: Lato, sans-serif;
		font-variant-ligatures: none;
		color: #000;
	}
	h1 {
		margin: 0 7px 37px;
		font-size: 41px;
		font-weight: 300;
		line-height: 57px;
	}
	.placeholder {
		flex: 1;
		border: 1px dotted #777;
	}
	ul {
		margin: 0;
		padding-left: 25px;
		font-size: 26px;
		line-height: 34px;
	}
	ul li::marker {
		content: '•  ';
		font-size: 20px;
	}
	.inserts {
		display: grid;
		grid-template-columns: repeat(3, 46px);
		justify-content: center;
		gap: 12px 8px;
		margin-top: 89px;
		padding-left: 4px;
	}
	.inserts svg {
		fill: none;
		stroke: #b5b5b5;
		stroke-width: 2;
	}

	/* status bar */
	.status {
		display: flex;
		align-items: center;
		height: 33px;
		padding: 0 38px 0 31px;
		border-top: 1px solid #dddcda;
		background: #f2f1f0;
		color: #605e5c;
		font-size: 17px;
	}
	.language {
		margin-left: 28px;
	}
	.feedback {
		margin-left: auto;
	}
	.notes {
		gap: 7px;
		margin: 0 13px 0 20px;
	}
	.view {
		justify-content: center;
		width: 60px;
		height: 33px;
		color: #3b3a39;
	}
	.on {
		background: #dededd;
	}
	.show {
		margin-left: 6px;
	}
	.step {
		margin: 0 28px 0 20px;
	}
	input + .step {
		margin: 0 25px;
	}
	input[type='range'] {
		appearance: none;
		width: 140px;
		height: 24px;
		margin: 0;
		background: linear-gradient(#605e5c, #605e5c) center / 100% 2px no-repeat;
	}
	input[type='range']::-webkit-slider-thumb {
		appearance: none;
		width: 9px;
		height: 23px;
		background: #605e5c;
	}
	.percent {
		margin: 0 42px 0 17px;
	}

	/* taskbar */
	footer {
		display: grid;
		grid-template-columns: 1fr auto 1fr;
		align-items: center;
		height: 72px;
		background: linear-gradient(to right, #1b2170 0, #22264c 14%, #20244a 38%, #26222c 44%, #332014 50%, #352918 58%, #24321c 64%, #1e1e50 70%, #191a85 74%, #1c1c78 90%, #232450 95%, #252733 97%, #22254c);
		color: #fff;
	}
	.weather {
		gap: 13px;
		padding-left: 32px;
		text-align: left;
	}
	.weather span,
	.clock {
		display: flex;
		flex-direction: column;
		font-size: 17px;
		line-height: 24px;
	}
	.weather small {
		font-size: 17px;
		color: #c9cad8;
	}
	.apps {
		display: flex;
		align-items: center;
		gap: 6px;
		padding-left: 4px;
	}
	.app {
		position: relative;
		justify-content: center;
		box-sizing: border-box;
		width: 60px;
		height: 60px;
		border-radius: 6px;
	}
	.app.active {
		border: 1px solid #4b3a2c;
		background: #3b3327;
	}
	.app.open::after,
	.app.active::after {
		content: '';
		position: absolute;
		bottom: 1px;
		width: 8px;
		height: 5px;
		border-radius: 3px;
		background: #9b9a9c;
	}
	.app.active::after {
		width: 24px;
		background: #4a8ff0;
	}
	.task-search {
		justify-content: center;
		gap: 8px;
		width: 150px;
		height: 48px;
		margin: 0 1px 0 2px;
		border-radius: 24px;
		background: #30335a;
	}
	.tray {
		display: flex;
		align-items: center;
		justify-content: flex-end;
		padding-right: 29px;
	}
	.tray svg {
		fill: none;
		stroke: #fff;
		stroke-width: 1.6;
	}
	.sync {
		margin: 0 22px 0 26px;
	}
	.indicators {
		display: flex;
		gap: 12px;
		margin-right: 20px;
	}
	.clock {
		align-items: flex-end;
		margin-right: 13px;
	}
</style>
